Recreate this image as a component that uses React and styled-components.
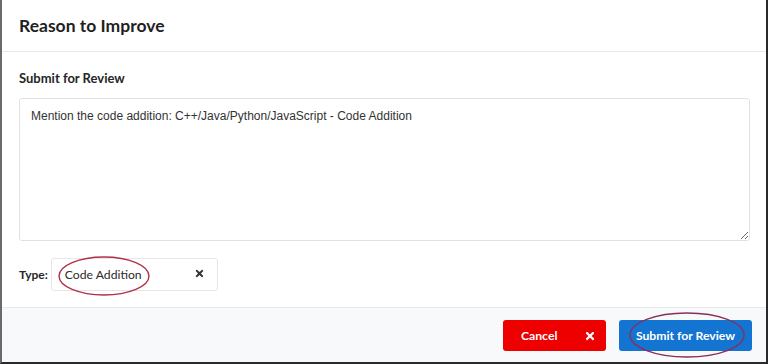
import React from 'react';
import styled, { createGlobalStyle } from 'styled-components';
import { FaTimes } from 'react-icons/fa';

const GlobalStyle = createGlobalStyle`
  html, body {
    margin: 0;
    padding: 0;
    background: #ffffff;
  }
  * {
    box-sizing: border-box;
  }
`;

const Modal = styled.div`
  width: 768px;
  height: 364px;
  display: flex;
  flex-direction: column;
  background: #ffffff;
  border-left: 2px solid #6a6a6a;
  border-right: 2px solid #2a2a2a;
  border-bottom: 2px solid #2a2a2a;
  font-family: Lato, 'Liberation Sans', sans-serif;
  color: #222;
  overflow: hidden;
`;

const Header = styled.div`
  height: 52px;
  display: flex;
  align-items: center;
  padding: 0 17px 1px;
  border-bottom: 1px solid #e9e9e9;
`;

const Title = styled.h2`
  margin: 0;
  font-size: 17.5px;
  font-weight: 700;
  color: #1f1f1f;
`;

const Body = styled.div`
  padding: 18px 15px 0 17px;
`;

const Label = styled.div`
  font-size: 13px;
  font-weight: 700;
  color: #262626;
  line-height: 16px;
`;

const TextArea = styled.textarea`
  display: block;
  width: 731px;
  height: 143px;
  margin-top: 12px;
  padding: 10px 11px;
  border: 1px solid #e2e2e2;
  border-radius: 3px;
  font-family: 'Liberation Sans', Arial, sans-serif;
  font-size: 12px;
  line-height: 14px;
  color: #333;
  outline: none;
`;

const TypeRow = styled.div`
  display: flex;
  align-items: center;
  gap: 3px;
  margin-top: 17px;
`;

const TypeLabel = styled.span`
  font-size: 12px;
  font-weight: 700;
  color: #262626;
`;

const TypeBox = styled.div`
  position: relative;
  width: 167px;
  height: 33px;
  display: flex;
  align-items: center;
  justify-content: space-between;
  padding: 0 12px 0 13px;
  border: 1px solid #e6e6e6;
  border-radius: 3px;
  font-size: 12.2px;
  color: #2a2a2a;
`;

const ClearIcon = styled(FaTimes)`
  font-size: 11px;
  color: #333;
  margin-top: -3px;
`;

const Ellipse = styled.svg`
  position: absolute;
  left: ${p => p.$left}px;
  top: ${p => p.$top}px;
  width: ${p => p.$w}px;
  height: ${p => p.$h}px;
  overflow: visible;
  pointer-events: none;
`;

const Footer = styled.div`
  margin-top: auto;
  height: 55px;
  display: flex;
  justify-content: flex-end;
  align-items: flex-start;
  gap: 13px;
  padding: 12px 14px 0 0;
  background: #f8f9fa;
  border-top: 1px solid #e9e9e9;
`;

const Button = styled.button`
  position: relative;
  height: 31px;
  width: ${p => p.$w}px;
  display: flex;
  align-items: center;
  justify-content: ${p => (p.$icon ? 'space-between' : 'center')};
  padding: ${p => (p.$icon ? '0 10px 0 18px' : '0 12px')};
  border: none;
  border-radius: 3px;
  background: ${p => p.$bg};
  color: #ffffff;
  font-family: Lato, 'Liberation Sans', sans-serif;
  font-size: 12.2px;
  font-weight: 700;
`;

const Oval = ({ left, top, w, h, color }) => (
  <Ellipse $left={left} $top={top} $w={w} $h={h} viewBox={`0 0 ${w} ${h}`}>
    <ellipse
      cx={w / 2}
      cy={h / 2}
      rx={w / 2 - 1}
      ry={h / 2 - 1}
      fill="none"
      stroke={color}
      strokeWidth="1.4"
    />
  </Ellipse>
);

export default function App() {
  return (
    <>
      <GlobalStyle />
      <Modal>
        <Header>
          <Title>Reason to Improve</Title>
        </Header>
        <Body>
          <Label>Submit for Review</Label>
          <TextArea
            readOnly
            defaultValue="Mention the code addition: C++/Java/Python/JavaScript - Code Addition"
          />
          <TypeRow>
            <TypeLabel>Type:</TypeLabel>
            <TypeBox>
              <span>Code Addition</span>
              <ClearIcon />
              <Oval left={6} top={-3} w={92} h={40} color="#b03048" />
            </TypeBox>
          </TypeRow>
        </Body>
        <Footer>
          <Button $w={103} $bg="#ee0000" $icon>
            <span>Cancel</span>
            <FaTimes size={12} />
          </Button>
          <Button $w={133} $bg="#1474d2">
            <span>Submit for Review</span>
            <Oval left={10} top={-8} w={116} h={46} color="#8a2f5a" />
          </Button>
        </Footer>
      </Modal>
    </>
  );
}
